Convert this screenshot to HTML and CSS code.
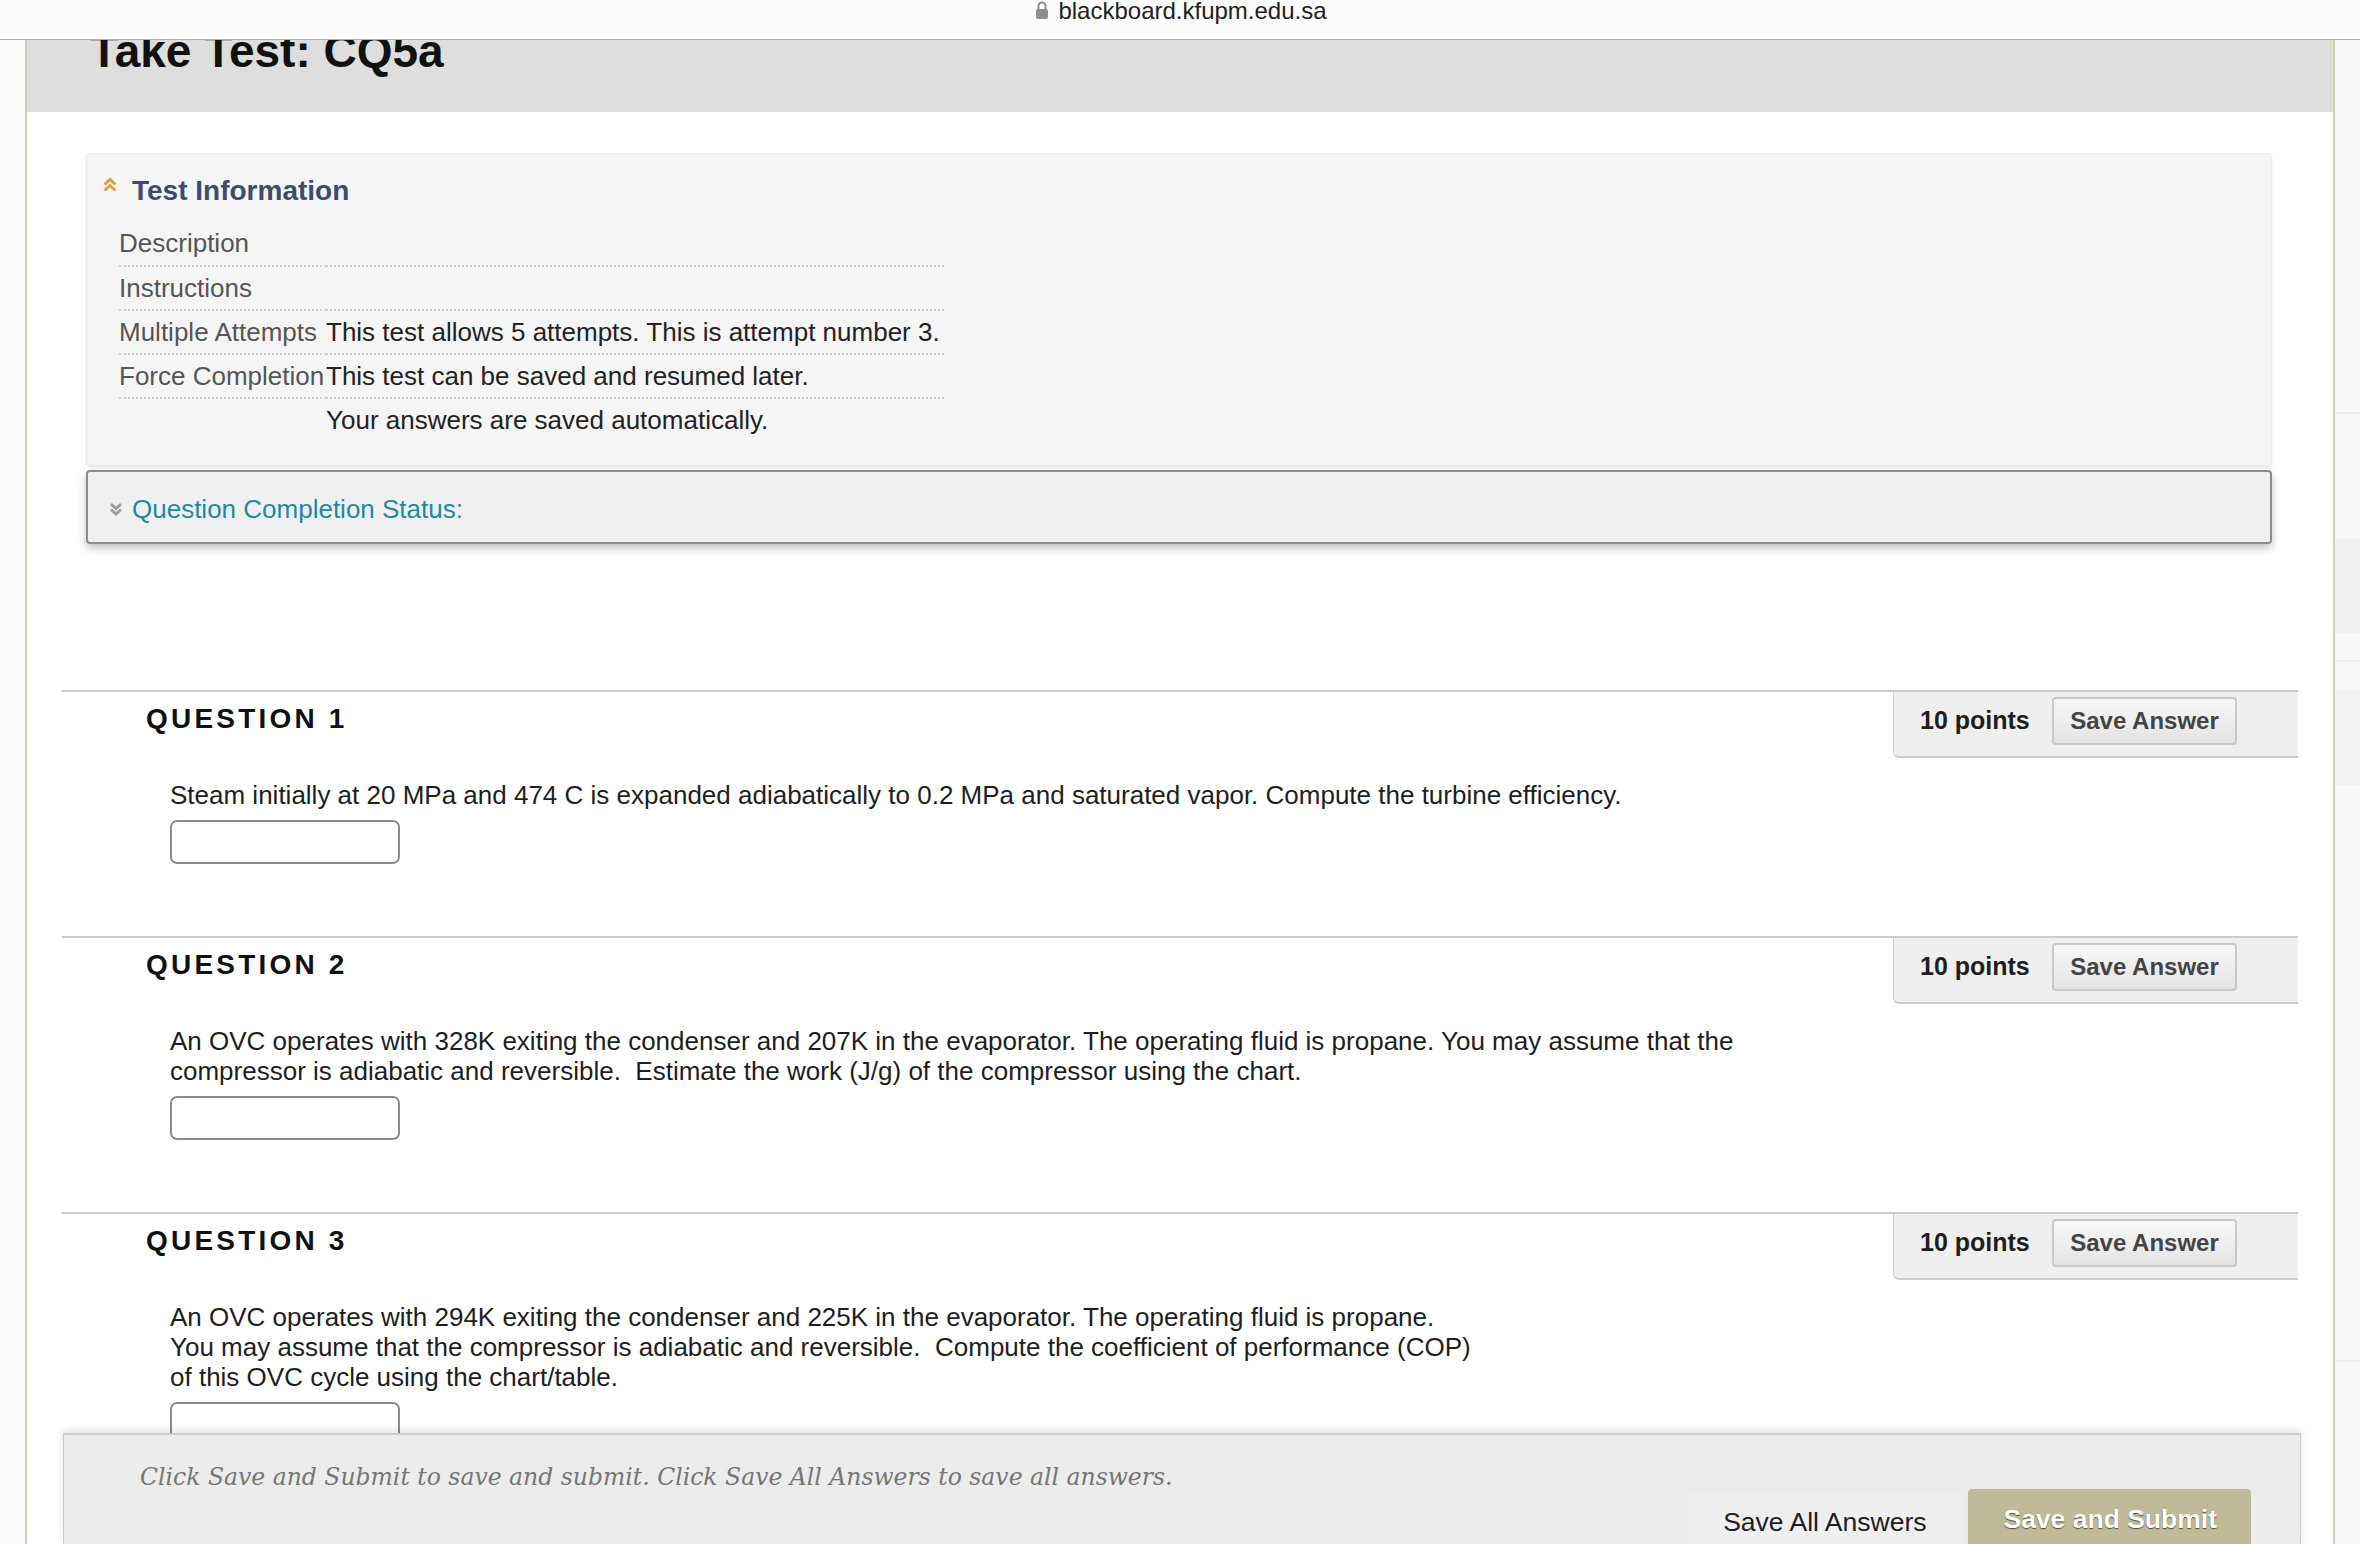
FILE: index.html
```html
<!DOCTYPE html>
<html lang="en">
<head>
    <meta charset="UTF-8">
    <meta name="viewport" content="width=device-width, initial-scale=1.0">
    <title>Take Test: CQ5a</title>
    <link rel="stylesheet" href="styles.css">
</head>
<body>

<!-- address bar -->
<div class="addressbar">
    <svg class="lock" width="14" height="20" viewBox="0 0 14 20">
        <path d="M3.5 9 V6 a3.5 3.5 0 0 1 7 0 V9" fill="none" stroke="#8e8e8e" stroke-width="2"/>
        <rect x="1" y="9" width="12" height="10" rx="2" fill="#8e8e8e"/>
    </svg>
    <span>blackboard.kfupm.edu.sa</span>
</div>

<div class="window">
    <div class="gutter"></div>

    <div class="frame">
        <div class="page-title">
            <h1>Take Test: CQ5a</h1>
        </div>

        <!-- test information -->
        <div class="info-panel">
            <h2 class="info-title">
                <svg class="chev" width="16" height="16" viewBox="0 0 16 16">
                    <path d="M2.5 7.5 L8 2.5 L13.5 7.5 M2.5 13.5 L8 8.5 L13.5 13.5" fill="none" stroke="#d9a132" stroke-width="2.8"/>
                </svg>
                Test Information
            </h2>
            <table class="info-table">
                <tr>
                    <th>Description</th>
                    <td></td>
                </tr>
                <tr>
                    <th>Instructions</th>
                    <td></td>
                </tr>
                <tr>
                    <th>Multiple Attempts</th>
                    <td>This test allows 5 attempts. This is attempt number 3.</td>
                </tr>
                <tr>
                    <th>Force Completion</th>
                    <td>This test can be saved and resumed later.</td>
                </tr>
                <tr class="last">
                    <th></th>
                    <td>Your answers are saved automatically.</td>
                </tr>
            </table>
        </div>

        <div class="status-box">
            <svg class="chev" width="16" height="14" viewBox="0 0 16 14">
                <path d="M3 2 L8 6.5 L13 2 M3 7.5 L8 12 L13 7.5" fill="none" stroke="#9a9a9a" stroke-width="2.8"/>
            </svg>
            <span>Question Completion Status:</span>
        </div>

        <!-- questions -->
        <div class="questions">
            <div class="question">
                <div class="question-head">
                    <h3>QUESTION 1</h3>
                    <div class="points">
                        <span>10 points</span>
                        <button class="save-answer">Save Answer</button>
                    </div>
                </div>
                <div class="question-body">
                    <p>Steam initially at 20 MPa and 474 C is expanded adiabatically to 0.2 MPa and saturated vapor. Compute the turbine efficiency.</p>
                    <input type="text" class="answer">
                </div>
            </div>

            <div class="question">
                <div class="question-head">
                    <h3>QUESTION 2</h3>
                    <div class="points">
                        <span>10 points</span>
                        <button class="save-answer">Save Answer</button>
                    </div>
                </div>
                <div class="question-body">
                    <p>An OVC operates with 328K exiting the condenser and 207K in the evaporator. The operating fluid is propane. You may assume that the<br>compressor is adiabatic and reversible.&nbsp; Estimate the work (J/g) of the compressor using the chart.</p>
                    <input type="text" class="answer">
                </div>
            </div>

            <div class="question">
                <div class="question-head">
                    <h3>QUESTION 3</h3>
                    <div class="points">
                        <span>10 points</span>
                        <button class="save-answer">Save Answer</button>
                    </div>
                </div>
                <div class="question-body">
                    <p>An OVC operates with 294K exiting the condenser and 225K in the evaporator. The operating fluid is propane.<br>You may assume that the compressor is adiabatic and reversible.&nbsp; Compute the coefficient of performance (COP)<br>of this OVC cycle using the chart/table.</p>
                    <input type="text" class="answer">
                </div>
            </div>
        </div>

        <!-- submit bar -->
        <div class="submit-bar">
            <p>Click Save and Submit to save and submit. Click Save All Answers to save all answers.</p>
            <div class="actions">
                <span class="save-all">Save All Answers</span>
                <button class="submit">Save and Submit</button>
            </div>
        </div>
    </div>

    <div class="backdrop"></div>
</div>

</body>
</html>
```

FILE: styles.css
```css
body {
    font-family: "Liberation Sans", Arial, sans-serif;
    margin: 0;
    padding: 0;
    background-color: #fbfbfb;
    color: #222;
    height: 1544px;
    overflow: hidden;
}
.addressbar {
    height: 39px;
    border-bottom: 1px solid #adadad;
    background-color: #fcfcfc;
    display: flex;
    justify-content: center;
    align-items: flex-start;
    gap: 9px;
    font-size: 24px;
    line-height: 22px;
    padding-left: 2px;
    position: relative;
    z-index: 2;
}
.window {
    display: flex;
    height: 1504px;
}
.gutter {
    width: 25px;
    background-color: #fbfbfb;
}
.frame {
    width: 2306px;
    border-left: 2px solid #d4cfac;
    border-right: 2px solid #d4cfac;
    background-color: #fff;
    position: relative;
    overflow: hidden;
}
.backdrop {
    flex: 1;
    background-color: #f8f8f8;
    background-image:
        linear-gradient(#ededed, #ededed),
        linear-gradient(#f1f1f1, #f1f1f1),
        linear-gradient(#eeeeee, #eeeeee),
        linear-gradient(#f2f2f2, #f2f2f2),
        linear-gradient(#ededed, #ededed);
    background-size: 100% 2px, 100% 95px, 100% 2px, 100% 95px, 100% 2px;
    background-position: 0 372px, 0 498px, 0 620px, 0 650px, 0 1320px;
    background-repeat: no-repeat;
}
.page-title {
    height: 72px;
    background-color: #dedede;
    overflow: hidden;
    padding-left: 63px;
}
.page-title h1 {
    margin: -12px 0 0;
    font-size: 46px;
    line-height: 46px;
    color: #111;
}
.info-panel {
    margin: 41px 61px 0 59px;
    padding: 19px 0 23px 15px;
    background-color: #f5f5f5;
    border: 1px solid #ebebeb;
    border-radius: 4px;
    box-shadow: 0 2px 3px rgba(0, 0, 0, 0.08);
}
.info-title {
    margin: 0;
    display: flex;
    align-items: center;
    gap: 14px;
    font-size: 28px;
    line-height: 36px;
    color: #3e4b6c;
}
.info-title .chev {
    margin-top: -12px;
}
.info-table {
    margin: 13px 0 0 17px;
    width: 825px;
    border-collapse: collapse;
    font-size: 26px;
}
.info-table th {
    width: 207px;
    padding: 0;
    text-align: left;
    font-weight: normal;
    color: #555;
    white-space: nowrap;
}
.info-table td {
    padding: 0;
    color: #222;
}
.info-table tr {
    height: 44px;
    border-bottom: 2px dotted #cfcfcf;
}
.info-table tr.last {
    border-bottom: none;
}
.status-box {
    margin: 4px 61px 0 59px;
    height: 66px;
    padding: 4px 0 0 20px;
    background-color: #f0f0f0;
    border: 2px solid #8c8c8c;
    border-radius: 4px;
    box-shadow: 0 4px 8px rgba(0, 0, 0, 0.25);
    display: flex;
    align-items: center;
    gap: 8px;
    font-size: 26px;
    color: #1a8ba3;
}
.questions {
    margin: 146px 35px 0 35px;
}
.question {
    border-top: 2px solid #cccccc;
    padding-bottom: 72px;
}
.question-head {
    display: flex;
    justify-content: space-between;
    align-items: flex-start;
}
.question-head h3 {
    margin: 0;
    padding: 10px 0 0 84px;
    font-size: 28px;
    line-height: 34px;
    letter-spacing: 3.2px;
    color: #111;
}
.points {
    flex-shrink: 0;
    width: 317px;
    height: 59px;
    padding: 5px 61px 0 26px;
    background-color: #efefef;
    border-left: 1px solid #d3d3d3;
    border-bottom: 2px solid #cccccc;
    border-bottom-left-radius: 6px;
    display: flex;
    align-items: flex-start;
    gap: 16px;
    font-size: 25px;
    font-weight: bold;
    line-height: 46px;
    white-space: nowrap;
    color: #1e1e1e;
}
.save-answer {
    flex-shrink: 0;
    width: 185px;
    height: 48px;
    margin-left: auto;
    padding: 0;
    border: 2px solid #c8c8c8;
    border-radius: 4px;
    background: linear-gradient(#f8f8f8, #e4e4e4);
    font-family: "Liberation Sans", Arial, sans-serif;
    font-size: 24px;
    font-weight: bold;
    color: #444;
}
.question-body {
    padding: 22px 0 0 108px;
}
.question-body p {
    margin: 0;
    font-size: 26px;
    line-height: 30px;
    color: #1e1e1e;
}
.answer {
    display: block;
    margin-top: 10px;
    width: 230px;
    height: 44px;
    box-sizing: border-box;
    border: 2px solid #8c8c8c;
    border-radius: 7px;
    background-color: #fff;
}
.submit-bar {
    position: absolute;
    left: 36px;
    right: 32px;
    bottom: 0;
    height: 109px;
    overflow: hidden;
    background-color: #ececec;
    border: 1px solid #cccccc;
    border-top: 2px solid #cdcdcd;
    border-bottom: none;
    box-shadow: 0 -4px 8px rgba(0, 0, 0, 0.1);
}
.submit-bar p {
    margin: 25px 0 0 76px;
    font-family: "DejaVu Serif", Georgia, serif;
    font-style: italic;
    font-size: 23.5px;
    line-height: 34px;
    color: #767676;
}
.actions {
    margin-top: -5px;
    padding-right: 49px;
    display: flex;
    justify-content: flex-end;
    align-items: flex-start;
}
.save-all {
    margin: 3px 6px 0 0;
    height: 60px;
    padding: 0 36px;
    background-color: #efefef;
    font-size: 26.5px;
    line-height: 60px;
    color: #1e1e1e;
}
.submit {
    height: 60px;
    padding: 0 34px 0 35px;
    border: none;
    border-radius: 4px 4px 0 0;
    background-color: #bfba97;
    font-family: "Liberation Sans", Arial, sans-serif;
    font-size: 26.5px;
    font-weight: bold;
    color: #fff;
    text-shadow: 0 1px 1px rgba(0, 0, 0, 0.6);
}
```
